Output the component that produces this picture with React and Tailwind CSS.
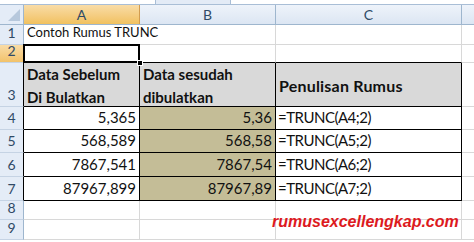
const font = { fontFamily: 'Lato, "Open Sans", sans-serif' };

const rowHeights = ['h-[20px]', 'h-[18px]', 'h-[44px]', 'h-[23px]', 'h-[23px]', 'h-[24px]', 'h-[24px]', 'h-[19px]', 'h-[20px]'];

const data = [
  ['5,365', '5,36', '=TRUNC(A4;2)'],
  ['568,589', '568,58', '=TRUNC(A5;2)'],
  ['7867,541', '7867,54', '=TRUNC(A6;2)'],
  ['87967,899', '87967,89', '=TRUNC(A7;2)'],
];

function RowHead({ n, h, selected, inTable }) {
  return (
    <div
      className={`${h} w-[24px] shrink-0 flex items-end justify-center pb-[1px] text-[14px] text-[#304a66] border-b border-b-[#c5d3e4] border-r ${
        inTable ? 'border-r-black' : 'border-r-[#9eb6ce]'
      } ${selected ? 'bg-gradient-to-b from-[#f9dca6] to-[#f2c26a]' : 'bg-[#e4ecf7]'}`}
    >
      {n}
    </div>
  );
}

function Cell({ w, h, className = '', children }) {
  return <div className={`${w} ${h} shrink-0 border-r border-b ${className}`}>{children}</div>;
}

export default function App() {
  return (
    <div className="w-[474px] h-[242px] bg-white overflow-hidden relative text-[#111]" style={font}>
      {/* top strip */}
      <div className="h-[5px] flex border-b border-b-[#a9bed6]">
        <div className="w-[155px]" />
        <div className="w-[76px] bg-[#e3ebf6] border-x border-[#a9bed6]" />
      </div>

      {/* column headers */}
      <div className="flex h-[20px] border-b border-b-[#9eb6ce]">
        <div className="w-[24px] shrink-0 bg-[#e4ecf7] border-r border-r-[#9eb6ce] relative overflow-hidden">
          <div className="absolute right-[3px] bottom-[3px] w-0 h-0 border-l-[12px] border-l-transparent border-b-[12px] border-b-[#b7c8dc]" />
        </div>
        <div className="w-[116px] shrink-0 flex items-center justify-center text-[14px] text-[#304a66] bg-gradient-to-b from-[#f9dca6] to-[#f1c15f] border-r border-r-[#d29c4f]">
          A
        </div>
        <div className="w-[136px] shrink-0 flex items-center justify-center text-[14px] text-[#304a66] bg-gradient-to-b from-[#eef3fa] to-[#dce6f3] border-r border-r-[#9eb6ce]">
          B
        </div>
        <div className="w-[186px] shrink-0 flex items-center justify-center text-[14px] text-[#304a66] bg-gradient-to-b from-[#eef3fa] to-[#dce6f3] border-r border-r-[#9eb6ce]">
          C
        </div>
        <div className="flex-1 bg-gradient-to-b from-[#eef3fa] to-[#dce6f3]" />
      </div>

      {/* row 1 */}
      <div className="flex">
        <RowHead n="1" h={rowHeights[0]} />
        <Cell w="w-[116px]" h={rowHeights[0]} className="border-r-transparent border-b-[#d8d8d8] relative">
          <span className="absolute left-[3px] bottom-[2px] whitespace-nowrap text-[13px]">Contoh Rumus TRUNC</span>
        </Cell>
        <Cell w="w-[136px]" h={rowHeights[0]} className="border-[#d8d8d8]" />
        <Cell w="w-[186px]" h={rowHeights[0]} className="border-[#d8d8d8]" />
        <div className={`flex-1 ${rowHeights[0]} border-b border-[#d8d8d8]`} />
      </div>

      {/* row 2 */}
      <div className="flex">
        <RowHead n="2" h={rowHeights[1]} selected />
        <Cell w="w-[116px]" h={rowHeights[1]} className="border-r-[#d8d8d8] border-b-black relative">
          <div className="absolute -left-[1px] -top-[1px] -right-[1px] -bottom-[1px] border-2 border-black" />
          <div className="absolute -right-[4px] -bottom-[4px] w-[6px] h-[6px] bg-black border border-white" />
        </Cell>
        <Cell w="w-[136px]" h={rowHeights[1]} className="border-r-[#d8d8d8] border-b-black" />
        <Cell w="w-[186px]" h={rowHeights[1]} className="border-r-[#d8d8d8] border-b-black" />
        <div className={`flex-1 ${rowHeights[1]} border-b border-[#d8d8d8]`} />
      </div>

      {/* row 3 */}
      <div className="flex">
        <RowHead n="3" h={rowHeights[2]} inTable />
        <Cell w="w-[116px]" h={rowHeights[2]} className="border-black bg-[#d9d9d9] font-bold text-[15px] leading-[23px] px-[3px]">
          Data Sebelum<br />Di Bulatkan
        </Cell>
        <Cell w="w-[136px]" h={rowHeights[2]} className="border-black bg-[#d9d9d9] font-bold text-[15px] leading-[23px] px-[3px]">
          Data sesudah<br />dibulatkan
        </Cell>
        <Cell w="w-[186px]" h={rowHeights[2]} className="border-black bg-[#d9d9d9] font-bold text-[16px] tracking-[0.2px] flex items-center pt-[3px] px-[3px]">
          Penulisan Rumus
        </Cell>
        <div className={`flex-1 ${rowHeights[2]} border-b border-[#d8d8d8]`} />
      </div>

      {/* rows 4-7 */}
      {data.map((r, i) => (
        <div className="flex" key={i}>
          <RowHead n={String(i + 4)} h={rowHeights[i + 3]} inTable />
          <Cell w="w-[116px]" h={rowHeights[i + 3]} className="border-black flex items-end justify-end px-[3px] pb-[1px] text-[15px]">
            {r[0]}
          </Cell>
          <Cell w="w-[136px]" h={rowHeights[i + 3]} className="border-black bg-[#c4bd97] flex items-end justify-end px-[3px] pb-[1px] text-[15px]">
            {r[1]}
          </Cell>
          <Cell w="w-[186px]" h={rowHeights[i + 3]} className="border-black flex items-end px-[2px] pb-[1px] text-[15px] tracking-[-0.5px]">
            {r[2]}
          </Cell>
          <div className={`flex-1 ${rowHeights[i + 3]} border-b border-[#d8d8d8]`} />
        </div>
      ))}

      {/* rows 8-9 */}
      {[7, 8].map((i) => (
        <div className="flex" key={i}>
          <RowHead n={String(i + 1)} h={rowHeights[i]} />
          <Cell w="w-[116px]" h={rowHeights[i]} className="border-[#d8d8d8]" />
          <Cell w="w-[136px]" h={rowHeights[i]} className="border-[#d8d8d8]" />
          <Cell w="w-[186px]" h={rowHeights[i]} className="border-[#d8d8d8]" />
          <div className={`flex-1 ${rowHeights[i]} border-b border-[#d8d8d8]`} />
        </div>
      ))}

      {/* watermark */}
      <div
        className="absolute left-[272px] top-[210px] text-[16px] font-bold italic text-[#dd1a1e] whitespace-nowrap"
        style={{ fontFamily: '"Liberation Sans", Arial, sans-serif' }}
      >
        rumusexcellengkap.com
      </div>
    </div>
  );
}
